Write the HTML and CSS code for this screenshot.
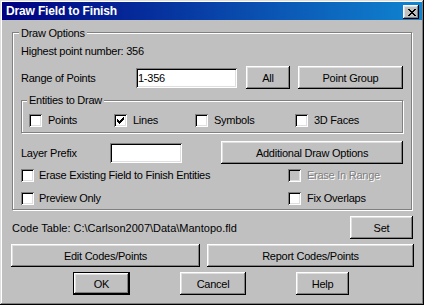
FILE: index.html
```html
<html>
<head>
	<link rel="stylesheet" href="styles.css">
</head>
<body>
<div class="window">
	<div class="titlebar">
		<span class="title">Draw Field to Finish</span>
		<span class="btn close">
			<svg width="8" height="7" viewBox="0 0 8 7" shape-rendering="crispEdges"><path fill="#000" d="M0 0h2v1h-2z M6 0h2v1h-2z M1 1h2v1h-2z M5 1h2v1h-2z M2 2h4v1h-4z M3 3h2v1h-2z M2 4h4v1h-4z M1 5h2v1h-2z M5 5h2v1h-2z M0 6h2v1h-2z M6 6h2v1h-2z"/></svg>
		</span>
	</div>
	<div class="client">
		<div class="group main-group">
			<span class="legend">Draw Options</span>
			<div class="info">Highest point number: 356</div>
			<div class="row range">
				<span class="range-label">Range of Points</span>
				<div class="textbox range-box">1-356</div>
				<span class="btn all-btn">All</span>
				<span class="btn group-btn">Point Group</span>
			</div>
			<div class="group entities">
				<span class="legend">Entities to Draw</span>
				<div class="entity-grid">
					<label class="check"><span class="box"></span>Points</label>
					<label class="check"><span class="box"><svg width="7" height="7" viewBox="0 0 7 7" shape-rendering="crispEdges"><path fill="#000" d="M6 0h1v1h-1z M5 1h2v1h-2z M0 2h1v1h-1z M4 2h3v1h-3z M0 3h2v1h-2z M3 3h3v1h-3z M0 4h5v1h-5z M1 5h3v1h-3z M2 6h1v1h-1z"/></svg></span>Lines</label>
					<label class="check"><span class="box"></span>Symbols</label>
					<label class="check"><span class="box"></span>3D Faces</label>
				</div>
			</div>
			<div class="row layer">
				<span class="layer-label">Layer Prefix</span>
				<div class="textbox layer-box"></div>
				<span class="btn more-btn">Additional Draw Options</span>
			</div>
			<div class="opts first-opts">
				<label class="check tight"><span class="box"></span>Erase Existing Field to Finish Entities</label>
				<label class="check disabled"><span class="box"></span>Erase In Range</label>
			</div>
			<div class="opts second-opts">
				<label class="check tight"><span class="box"></span>Preview Only</label>
				<label class="check"><span class="box"></span>Fix Overlaps</label>
			</div>
		</div>
		<div class="row code-row">
			<span class="code-text">Code Table: C:\Carlson2007\Data\Mantopo.fld</span>
			<span class="btn set-btn">Set</span>
		</div>
		<div class="row edit-row">
			<span class="btn edit-btn">Edit Codes/Points</span>
			<span class="btn report-btn">Report Codes/Points</span>
		</div>
		<div class="row bottom-row">
			<span class="btn default ok-btn">OK</span>
			<span class="btn cancel-btn">Cancel</span>
			<span class="btn help-btn">Help</span>
		</div>
	</div>
</div>
</body>
</html>
```

FILE: styles.css
```css
body {
	margin: 0;
	background: #c0c0c0;
	font-family: "Liberation Sans", Arial, sans-serif;
	font-size: 11px;
	letter-spacing: -0.25px;
	color: #000;
}

.window {
	width: 424px;
	height: 305px;
	box-sizing: border-box;
	padding: 2px;
	background: #c0c0c0;
	box-shadow: inset -1px -1px #000, inset 1px 1px #dfdfdf, inset -2px -2px #808080, inset 2px 2px #fff;
}

.titlebar {
	height: 18px;
	display: flex;
	align-items: flex-start;
	padding-left: 4px;
	background: linear-gradient(to right, #000080, #1084d0);
	color: #fff;
}
.title {
	font-weight: bold;
	font-size: 12px;
	letter-spacing: -0.15px;
	line-height: 19px;
}

.btn {
	box-sizing: border-box;
	display: flex;
	align-items: center;
	justify-content: center;
	height: 23px;
	background: #c0c0c0;
	box-shadow: inset -1px -1px #000, inset 1px 1px #fff, inset -2px -2px #808080, inset 2px 2px #dfdfdf;
	white-space: nowrap;
}
.btn.default {
	border: 1px solid #000;
}
.close {
	margin-left: auto;
	margin-right: 3px;
	margin-top: 3px;
	width: 16px;
	height: 14px;
	padding-left: 1px;
}
.close svg { display: block; }

.client {
	padding: 0 8px 0 9px;
}

.group {
	position: relative;
	box-sizing: border-box;
	border: 1px solid #808080;
	box-shadow: inset 1px 1px #fff, 1px 1px #fff;
}
.legend {
	position: absolute;
	background: #c0c0c0;
	padding: 0 2px;
	line-height: 13px;
}

.main-group {
	margin: 12px 0 0 1px;
	width: 400px;
	height: 178px;
	padding: 0 8px;
}
.main-group > .legend {
	top: -6px;
	left: 6px;
}

.row {
	display: flex;
	align-items: center;
}

.info {
	margin-top: 12px;
	height: 13px;
	line-height: 13px;
}

.range {
	margin-top: 8px;
	height: 23px;
}
.range-label { width: 115px; }

.textbox {
	box-sizing: border-box;
	height: 20px;
	line-height: 20px;
	padding: 0 2px;
	background: #fff;
	box-shadow: inset 1px 1px #808080, inset -1px -1px #fff, inset 2px 2px #000, inset -2px -2px #dfdfdf;
}
.range-box { width: 101px; }
.all-btn { margin-left: 9px; width: 44px; }
.group-btn { margin-left: 8px; width: 105px; }

.entities {
	margin-top: 11px;
	width: 382px;
	height: 33px;
	padding: 13px 0 0 7px;
}
.entities > .legend {
	top: -7px;
	left: 5px;
}
.entity-grid {
	display: grid;
	grid-template-columns: 85px 81px 100px auto;
}

.check {
	display: flex;
	align-items: center;
	gap: 6px;
	height: 13px;
	line-height: 13px;
	white-space: nowrap;
}
.check.tight { gap: 5px; }
.box {
	flex: none;
	box-sizing: border-box;
	width: 13px;
	height: 13px;
	padding: 3px;
	background: #fff;
	box-shadow: inset 1px 1px #808080, inset -1px -1px #fff, inset 2px 2px #000, inset -2px -2px #dfdfdf;
}
.box svg { display: block; }
.check.disabled { color: #808080; text-shadow: 1px 1px #fff; }
.check.disabled .box { background: #c0c0c0; }

.layer {
	margin-top: 8px;
	height: 23px;
}
.layer-label { width: 90px; }
.layer-box { width: 72px; }
.more-btn { margin-left: 39px; width: 183px; }

.opts {
	display: grid;
	grid-template-columns: 267px auto;
	height: 13px;
}
.first-opts { margin-top: 5px; }
.second-opts { margin-top: 10px; }

.code-row {
	margin-top: 6px;
	height: 23px;
}
.code-text { margin-left: 1px; letter-spacing: 0; }
.set-btn { margin-left: auto; margin-right: 1px; width: 63px; }

.edit-row {
	margin-top: 5px;
	height: 23px;
}
.edit-btn { width: 189px; }
.report-btn { margin-left: auto; width: 207px; }

.bottom-row {
	margin-top: 5px;
	height: 23px;
}
.ok-btn { margin-left: 62px; width: 57px; }
.cancel-btn { margin-left: 50px; width: 66px; }
.help-btn { margin-left: 50px; width: 53px; }
```
